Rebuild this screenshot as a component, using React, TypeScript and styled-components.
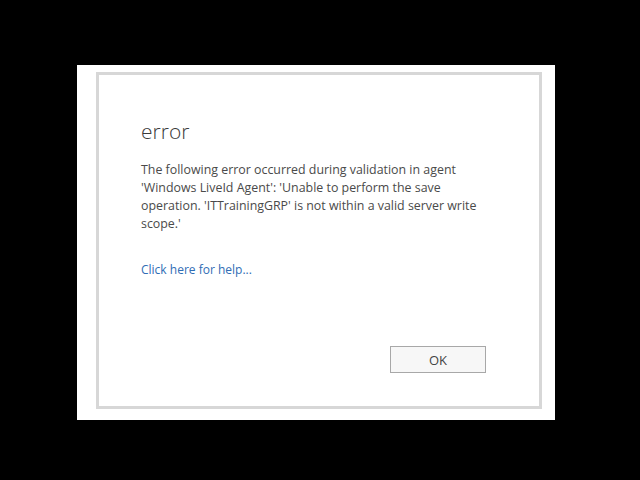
import React from "react";
import styled, { createGlobalStyle } from "styled-components";

const Global = createGlobalStyle`
  html, body { margin: 0; padding: 0; background: #000; }
  body { width: 640px; height: 480px; overflow: hidden; font-family: "Open Sans", "Noto Sans", sans-serif; }
`;

const Screen = styled.div`
  width: 640px;
  height: 480px;
  background: #000;
  display: flex;
  align-items: flex-start;
  justify-content: flex-start;
  padding: 65px 0 0 77px;
  box-sizing: border-box;
`;

const Frame = styled.div`
  width: 478px;
  height: 355px;
  background: #fff;
  box-sizing: border-box;
  padding: 7px 13px 0 19px;
`;

const Dialog = styled.div`
  width: 446px;
  height: 337px;
  box-sizing: border-box;
  border: 3px solid #d7d7d7;
  background: #fff;
  padding: 42px 53px 0 42px;
  display: flex;
  flex-direction: column;
`;

const Title = styled.h1`
  margin: 0;
  font-family: "Open Sans", sans-serif;
  font-weight: 300;
  font-size: 21px;
  line-height: 28px;
  color: #3a3a3a;
`;

const Message = styled.p`
  margin: 16px 0 0;
  font-size: 12.4px;
  line-height: 18px;
  color: #4a4a4a;
`;

const HelpLink = styled.a`
  margin-top: 28px;
  font-size: 12px;
  line-height: 18px;
  color: #2f6db5;
  text-decoration: none;
`;

const Footer = styled.div`
  display: flex;
  justify-content: flex-end;
  margin-top: 67px;
`;

const Button = styled.button`
  width: 96px;
  height: 27px;
  box-sizing: border-box;
  border: 1px solid #a8a8a8;
  background: #f7f7f7;
  font-family: "Open Sans", sans-serif;
  font-size: 13px;
  color: #444;
  padding: 0;
`;

export default function App() {
  return (
    <Screen>
      <Global />
      <Frame>
        <Dialog>
          <Title>error</Title>
          <Message>
            The following error occurred during validation in agent 'Windows LiveId Agent': 'Unable to perform the save
            operation. 'ITTrainingGRP' is not within a valid server write scope.'
          </Message>
          <HelpLink href="#">Click here for help...</HelpLink>
          <Footer>
            <Button>OK</Button>
          </Footer>
        </Dialog>
      </Frame>
    </Screen>
  );
}
